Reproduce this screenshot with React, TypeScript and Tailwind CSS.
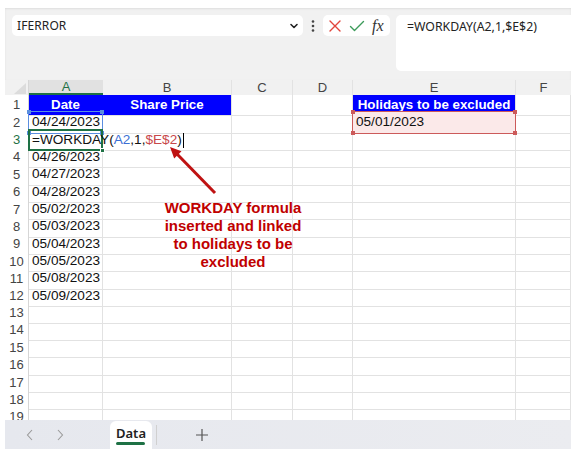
import React from "react";

const COLS = "grid grid-cols-[24px_74px_129px_61px_60px_163px_55px]";
const dates = ["04/26/2023","04/27/2023","04/28/2023","05/02/2023","05/03/2023","05/04/2023","05/05/2023","05/08/2023","05/09/2023"];

function Handles({ color }: { color: string }) {
  const c = `absolute w-[4px] h-[4px] ${color}`;
  return (
    <>
      <span className={`${c} -left-[2px] -top-[2px]`} />
      <span className={`${c} -right-[2px] -top-[2px]`} />
      <span className={`${c} -left-[2px] -bottom-[2px]`} />
      <span className={`${c} -right-[2px] -bottom-[2px]`} />
    </>
  );
}

function Row({ n }: { n: number }) {
  const cell = "h-full border-r border-b border-[#e2e2e2] flex items-center px-[3px] text-[13.6px] text-[#111] whitespace-nowrap";
  let a: React.ReactNode = null, b: React.ReactNode = null, e: React.ReactNode = null;
  let aCls = cell, bCls = cell, eCls = cell;
  if (n === 1) {
    aCls = cell + " bg-[#0000ff] justify-center font-bold text-white border-r-[#0000ff] !text-[13.33px]";
    bCls = cell + " bg-[#0000ff] justify-center font-bold text-white !text-[13.33px]";
    eCls = cell + " bg-[#0000ff] justify-center font-bold text-white !text-[13.33px]";
    a = <span className="text-white">Date</span>;
    b = <span className="text-white">Share Price</span>;
    e = <span className="text-white">Holidays to be excluded</span>;
  } else if (n === 2) {
    aCls = cell + " relative";
    a = (
      <>
        04/24/2023
        <span className="absolute inset-[-1px] border border-[#5b8ee0]" />
        <Handles color="bg-[#5b8ee0]" />
      </>
    );
    eCls = cell + " relative bg-[#fbe9e9]";
    e = (
      <>
        05/01/2023
        <span className="absolute inset-[-1px] border border-[#cc5a5a]" />
        <Handles color="bg-[#cc5a5a]" />
      </>
    );
  } else if (n === 3) {
    aCls = cell + " relative overflow-visible z-10";
    a = (
      <>
        <span className="relative z-10">
          =WORKDAY(<span className="text-[#3b6fd4]">A2</span>,1,<span className="text-[#c8484a]">$E$2</span>)
          <span className="inline-block w-[1px] h-[15px] bg-black align-middle ml-[1px]" />
        </span>
        <span className="absolute inset-[-1px] border-2 border-[#1e7145]" />
        <span className="absolute -right-[3px] -bottom-[3px] w-[5px] h-[5px] bg-[#1e7145] border border-white" />
      </>
    );
  } else if (n >= 4 && n <= 12) {
    a = dates[n - 4];
  }
  return (
    <div className={`${COLS} h-[17.35px] shrink-0`}>
      <div className={`h-full border-r border-b border-[#d6d6d6] border-b-[#e2e2e2] flex items-center justify-center text-[13px] ${n === 3 ? "text-[#1e7145]" : "text-[#444]"} bg-white`}>{n}</div>
      <div className={aCls}>{a}</div>
      <div className={bCls}>{b}</div>
      <div className={cell}></div>
      <div className={cell}></div>
      <div className={eCls}>{e}</div>
      <div className={cell}></div>
    </div>
  );
}

export default function App() {
  const rows = Array.from({ length: 19 }, (_, i) => i + 1);
  return (
    <div className="w-[577px] h-[454px] bg-white pt-[8px] pl-[5px] overflow-hidden" style={{ fontFamily: '"Liberation Sans", Arial, sans-serif' }}>
      <div className="w-[566px] flex flex-col">
        {/* formula bar */}
        <div className="h-[72px] bg-[#f1f1f1] shadow-[inset_0_1px_2px_rgba(0,0,0,0.08)] flex items-start pt-[7px] pl-[7px]" style={{ fontFamily: '"Noto Sans", "Open Sans", sans-serif' }}>
          <div className="w-[291px] h-[21px] rounded-[5px] bg-white flex items-center justify-between pl-[5px] pr-[4px]">
            <span className="text-[12px] text-[#222] tracking-[0.1px]">IFERROR</span>
            <svg width="10" height="10" viewBox="0 0 10 10"><path d="M2 3.5 L5 6.5 L8 3.5" fill="none" stroke="#222" strokeWidth="1.6" strokeLinecap="round" strokeLinejoin="round" /></svg>
          </div>
          <div className="w-[20px] h-[21px] flex items-center justify-center">
            <svg width="4" height="14" viewBox="0 0 4 14"><circle cx="2" cy="2.5" r="1.3" fill="#444" /><circle cx="2" cy="7" r="1.3" fill="#444" /><circle cx="2" cy="11.5" r="1.3" fill="#444" /></svg>
          </div>
          <div className="w-[67px] h-[21px] rounded-[5px] bg-white flex items-center pl-[4px]">
            <svg width="14" height="14" viewBox="0 0 14 14" className="ml-[1px]"><path d="M2 2 L12 12 M12 2 L2 12" stroke="#e2453c" strokeWidth="1.4" strokeLinecap="round" /></svg>
            <svg width="16" height="14" viewBox="0 0 16 14" className="ml-[7px]"><path d="M1.5 7.5 L5.5 11.5 L14.5 2.5" fill="none" stroke="#3c9b5a" strokeWidth="1.4" strokeLinecap="round" strokeLinejoin="round" /></svg>
            <span className="ml-[7px] italic text-[16px] text-[#333] leading-none" style={{ fontFamily: '"Liberation Serif", serif' }}>fx</span>
          </div>
          <div className="ml-[6px] flex-1 h-[56px] rounded-l-[5px] bg-white pl-[11px] pt-[3px] text-[12.3px] text-[#222]">=WORKDAY(A2,1,$E$2)</div>
        </div>
        {/* grid */}
        <div className="relative h-[340px] overflow-hidden flex flex-col">
          <div className={`${COLS} h-[15px] shrink-0 bg-[#f1f1f1] text-[13px] text-[#444]`}>
            <div className="relative border-r border-[#d6d6d6] overflow-hidden">
              <svg className="absolute right-[2px] bottom-[1px]" width="12" height="11" viewBox="0 0 12 11"><path d="M12 0 L12 11 L0 11 Z" fill="#dcdcdc" /></svg>
            </div>
            <div className="bg-[#e1e1e1] border-b-2 border-[#1e7145] text-[#1e7145] flex items-center justify-center leading-none">A</div>
            <div className="border-r border-[#e2e2e2] flex items-center justify-center leading-none">B</div>
            <div className="border-r border-[#e2e2e2] flex items-center justify-center leading-none">C</div>
            <div className="border-r border-[#e2e2e2] flex items-center justify-center leading-none">D</div>
            <div className="border-r border-[#e2e2e2] flex items-center justify-center leading-none">E</div>
            <div className="flex items-center justify-center leading-none">F</div>
          </div>
          {rows.map((n) => <Row key={n} n={n} />)}
          <svg className="absolute left-0 top-0 pointer-events-none" width="566" height="340" viewBox="0 0 566 340">
            <line x1="210" y1="113" x2="172" y2="74" stroke="#bf1212" strokeWidth="3" />
            <polygon points="165,67 176.5,71.2 169.2,78.6" fill="#bf1212" />
          </svg>
          <div className="absolute left-[128px] top-[119px] w-[200px] text-center font-bold text-[15px] leading-[18px] text-[#c00000]">
            WORKDAY formula<br />inserted and linked<br />to holidays to be<br />excluded
          </div>
        </div>
        {/* tab bar */}
        <div className="h-[29px] bg-gradient-to-r from-[#e6e8ee] to-[#ebecf0] flex items-end relative" style={{ fontFamily: '"Noto Sans", "Open Sans", sans-serif' }}>
          <div className="w-[105px] h-full flex items-center">
            <svg className="ml-[21px]" width="8" height="12" viewBox="0 0 8 12"><path d="M6 1 L1.5 6 L6 11" fill="none" stroke="#9a9a9a" strokeWidth="1.1" /></svg>
            <svg className="ml-[22px]" width="8" height="12" viewBox="0 0 8 12"><path d="M2 1 L6.5 6 L2 11" fill="none" stroke="#9a9a9a" strokeWidth="1.1" /></svg>
          </div>
          <div className="w-[42px] h-[28px] bg-white rounded-t-[6px] flex flex-col items-center justify-center relative">
            <span className="text-[13px] font-semibold text-[#222] leading-none -mt-[3px]">Data</span>
            <span className="absolute bottom-[4px] left-[6px] w-[29px] h-[3px] rounded-full bg-[#1e7145]" />
          </div>
          <div className="self-center w-px h-[20px] bg-[#d0d0d0] ml-[4px]" />
          <div className="self-center ml-[38px]">
            <svg width="14" height="14" viewBox="0 0 14 14"><path d="M7 1 V13 M1 7 H13" stroke="#555" strokeWidth="1.2" /></svg>
          </div>
        </div>
      </div>
    </div>
  );
}
